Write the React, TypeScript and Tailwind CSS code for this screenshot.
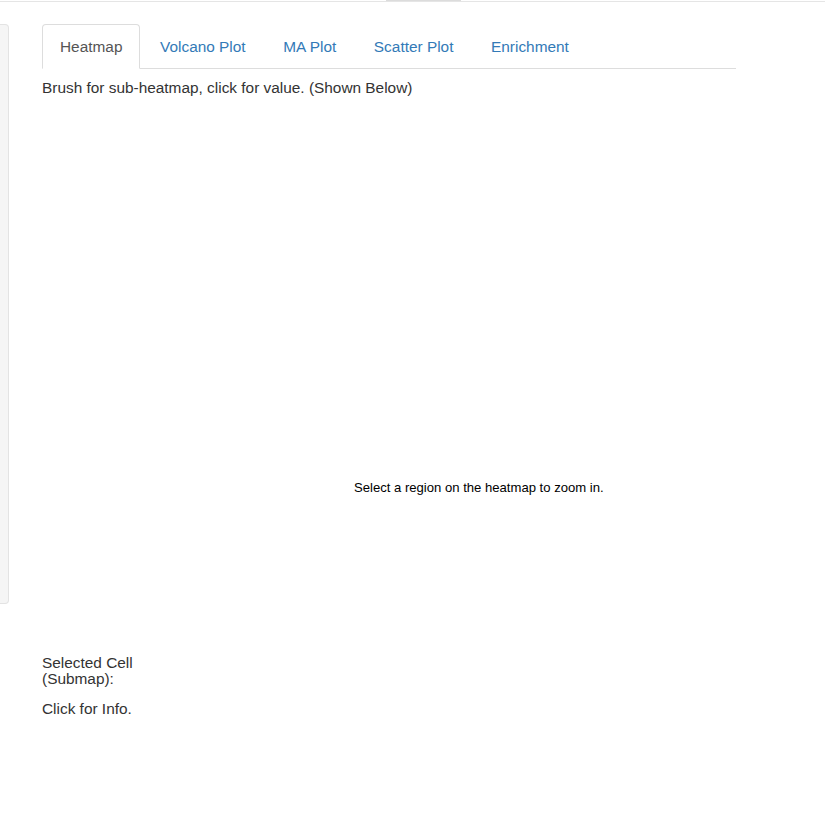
const tabs = ["Heatmap", "Volcano Plot", "MA Plot", "Scatter Plot", "Enrichment"];

export default function App() {
  return (
    <div className="min-h-[821px] w-full bg-white font-['Liberation_Sans',Arial,sans-serif] text-[15.4px] text-[#333]">
      {/* top scroll strip */}
      <div className="flex h-[2px] border-b border-[#e5e5e5]">
        <div className="w-[386px]" />
        <div className="w-[75px] bg-[#dcdcdc]" />
      </div>

      <div className="flex">
        {/* edge of the sidebar well */}
        <div className="mt-[22px] h-[580px] w-[9px] rounded-r border border-l-0 border-[#e3e3e3] bg-[#f5f5f5]" />

        <div className="ml-[33px] flex flex-col">
          {/* tabs */}
          <ul className="mt-[22px] flex w-[694px] border-b border-[#ddd]">
            {tabs.map((t, i) => (
              <li key={t} className="-mb-px mr-[2px]">
                <span
                  className={
                    i === 0
                      ? "block rounded-t border border-[#ddd] border-b-transparent bg-white pl-[17px] pr-[16.6px] pt-[12px] pb-[11px] leading-5 text-[#555]"
                      : "block rounded-t border border-transparent pl-[17px] pr-[16.6px] pt-[12px] pb-[11px] leading-5 text-[#337ab7]"
                  }
                >
                  {t}
                </span>
              </li>
            ))}
          </ul>

          <p className="mt-[9px] leading-5">Brush for sub-heatmap, click for value. (Shown Below)</p>

          {/* sub-heatmap output */}
          <div className="h-[557px] pl-[312px] pt-[377px]">
            <span className="text-[13.1px] leading-4 text-black">Select a region on the heatmap to zoom in.</span>
          </div>

          <div className="w-[110px]">
            <p className="leading-4">Selected Cell (Submap):</p>
            <p className="mt-[14px] leading-4">Click for Info.</p>
          </div>
        </div>
      </div>
    </div>
  );
}
